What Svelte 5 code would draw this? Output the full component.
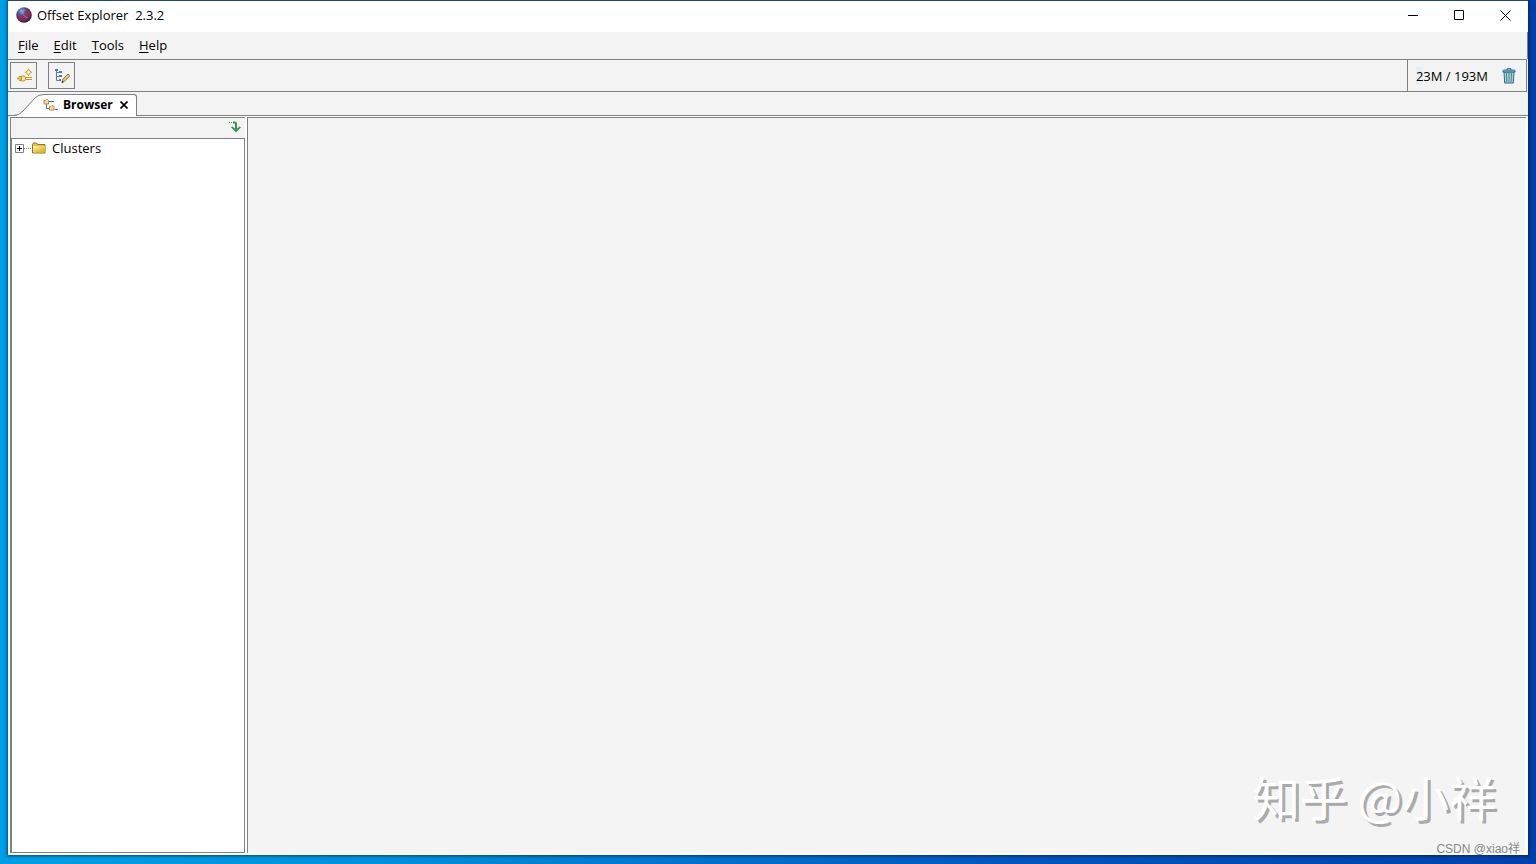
<script lang="ts">
  const menus = ["File", "Edit", "Tools", "Help"];
  const title = "Offset Explorer  2.3.2";
  let used = $state(23);
  let total = $state(193);
  let expanded = $state(false);
  let tabOpen = $state(true);
</script>

<div class="desktop">
  <div class="window">
    <header class="titlebar">
      <svg class="logo" width="16" height="16" viewBox="0 0 16 16">
        <defs>
          <radialGradient id="ball" cx="0.35" cy="0.25" r="0.8">
            <stop offset="0" stop-color="#8da3d6" />
            <stop offset="0.35" stop-color="#485293" />
            <stop offset="0.65" stop-color="#71284f" />
            <stop offset="1" stop-color="#251f50" />
          </radialGradient>
        </defs>
        <circle cx="8" cy="8" r="7.8" fill="url(#ball)" />
        <path d="M1 9q5 1 7-3t6-1q1 4-2 7t-7 1z" fill="#a83250" opacity=".5" />
        <path d="M4 3l3 2M9 2l-2 3 1 4 4 2" stroke="#b9b8dc" opacity=".4" fill="none" />
      </svg>
      <span class="title">{title}</span>
      <div class="controls">
        <button aria-label="Minimize">
          <svg width="11" height="11" viewBox="0 0 11 11"><path d="M0 5.5h10" stroke="#000" /></svg>
        </button>
        <button aria-label="Maximize">
          <svg width="11" height="11" viewBox="0 0 11 11"><path d="M.5.5h9v9h-9z" stroke="#000" fill="none" /></svg>
        </button>
        <button aria-label="Close">
          <svg width="11" height="11" viewBox="0 0 11 11"><path d="M.5.5l10 10M10.5.5l-10 10" stroke="#000" /></svg>
        </button>
      </div>
    </header>

    <nav class="menubar">
      {#each menus as menu}
        <button><u>{menu[0]}</u>{menu.slice(1)}</button>
      {/each}
    </nav>

    <div class="toolbar">
      <button class="tool" aria-label="Add connection">
        <svg width="16" height="16" viewBox="0 0 16 16" fill="none" stroke="#c59526">
          <path d="M1 10.500h2M3 8.500h2v4H3zM5.500 8H8q1.500 0 1.500 2.500T8 13H5.500zM9.500 9.500H16M9.500 11.500H16" fill="#f7e6a5" />
          <path d="M12.500.8L13.600 3l2.200 1.300-2.200 1.300-1.100 2.200-1.100-2.200-2.200-1.300L11.400 3z" fill="#fff4bf" stroke-width=".9" />
        </svg>
      </button>
      <button class="tool" aria-label="Edit connection">
        <svg width="16" height="16" viewBox="0 0 16 16" fill="none">
          <path d="M2.500 3v9.500h3M2.500 4.500h3M2.500 8.500h3" stroke="#5f7fb8" />
          <path d="M1 1h3v2H1zM5 3h3v2H5zM5 7h3v2H5zM5 11h2v2H5z" fill="#4f78bd" />
          <path d="M8 14.500l.8-3 5.200-5.500 1.800 1.800L10.500 13.300z" fill="#e4cf85" stroke="#8d6f31" />
          <path d="M7.500 15l.8-2 1.200 1.200z" fill="#333" />
        </svg>
      </button>
      <div class="memory">
        <span>{used}M / {total}M</span>
        <button aria-label="Run garbage collector">
          <svg width="14" height="16" viewBox="0 0 14 16">
            <path d="M2 4h10l-.7 11H2.700z" fill="#a8d8c0" stroke="#276b99" />
            <path d="M4.500 5l.3 9M7 5v9M9.500 5l-.3 9" stroke="#3a7ba0" stroke-width=".9" />
            <path d="M5 2V.7h4V2" stroke="#276b99" fill="none" />
            <path d="M1.500 2h11l.8 2H.7z" fill="#7db8c6" stroke="#245f8d" stroke-width=".8" />
          </svg>
        </button>
      </div>
    </div>

    <div class="tabs">
      {#if tabOpen}
        <div class="tab">
          <svg width="30" height="22" viewBox="0 0 30 22">
            <path d="M0 22Q5 21.500 9 17L21 4Q24 .5 30 .5V22z" fill="#fff" />
            <path d="M0 21.500Q5 21.500 9 17L21 4Q24 .5 30 .5" fill="none" stroke="#7b7b7b" />
          </svg>
          <div class="tab-body">
            <svg width="16" height="14" viewBox="0 0 16 14" fill="none">
              <path d="M3.500 6v4.500H7M6 3.500h4" stroke="#3b83ae" />
              <path d="M1 2.500h1.500l1-1h1l1 1V6H1z" fill="#fbd7a0" stroke="#c8873b" />
              <path d="M6.500 8.500H8l1-1h1l1 1V12H6.500z" fill="#fbd7a0" stroke="#c8873b" />
              <path d="M7 3.500h4M12 11.500h3" stroke="#2d719d" />
            </svg>
            <span>Browser</span>
            <button aria-label="Close tab" onclick={() => (tabOpen = false)}>
              <svg width="8" height="8" viewBox="0 0 8 8"><path d="M.5.5l7 7M7.500.5l-7 7" stroke="#000" stroke-width="1.600" /></svg>
            </button>
          </div>
        </div>
      {/if}
    </div>

    <main class="content">
      <aside class="sidebar">
        <div class="side-head">
          <button aria-label="Link selection">
            <svg width="13" height="12" viewBox="0 0 13 12">
              <path d="M1 1.500h1M3 1.500h1" stroke="#4d9b63" />
              <path d="M5 1.500h2Q8 1.500 8 3v5" stroke="#388b50" stroke-width="2" fill="none" />
              <path d="M3 6.200l1.500-.7L8 8.500l3.500-3 1.500.7L8 11.500z" fill="#359453" />
            </svg>
          </button>
        </div>
        <div class="tree">
          <div class="node">
            <button aria-label="Expand Clusters" aria-expanded={expanded} onclick={() => (expanded = !expanded)}>
              <svg width="9" height="9" viewBox="0 0 9 9">
                <path d="M.5.5h8v8h-8z" fill="#fff" stroke="#808080" />
                <path d="M2 4.500h5" stroke="#000" />
                {#if !expanded}<path d="M4.500 2v5" stroke="#000" />{/if}
              </svg>
            </button>
            <span class="dots"></span>
            <svg width="14" height="12" viewBox="0 0 14 12">
              <defs>
                <linearGradient id="folder" x2="1" y2="1">
                  <stop stop-color="#fff39a" />
                  <stop offset="1" stop-color="#d0aa1d" />
                </linearGradient>
              </defs>
              <path d="M.5 2.500l1-1.500h3l1 1.500h7.500v8.500H.5z" fill="#dfc34a" stroke="#8f7427" />
              <path d="M1 4h12v6.500H1z" fill="url(#folder)" />
            </svg>
            <span class="label">Clusters</span>
          </div>
        </div>
      </aside>
      <section class="workspace"></section>
    </main>
  </div>

  <div class="watermark">知乎 @小祥</div>
  <div class="credit">CSDN @xiao祥</div>
</div>

<style>
  :global(body) {
    margin: 0;
  }
  .desktop {
    position: relative;
    box-sizing: border-box;
    height: 100vh;
    padding: 0 8px 9px;
    display: flex;
    background: linear-gradient(90deg, #009fe5 0%, #0090dc 25%, #0056bd 65%, #0040aa 100%);
    font-family: "Open Sans", "Noto Sans CJK SC", sans-serif;
    font-size: 13px;
    line-height: 18px;
    color: #000;
  }
  .window {
    flex: 1;
    min-width: 0;
    display: flex;
    flex-direction: column;
    border-top: 1px solid #27485f;
    background: #f3f3f3;
    box-shadow: 0 0 3px 1px rgba(0, 20, 50, 0.6);
  }
  button {
    display: flex;
    align-items: center;
    justify-content: center;
    padding: 0;
    border: 0;
    background: none;
    font: inherit;
    color: inherit;
  }
  svg {
    display: block;
    flex: none;
  }
  .titlebar {
    display: flex;
    align-items: center;
    box-sizing: border-box;
    height: 31px;
    padding: 0 0 3px 8px;
    background: #fff;
  }
  .title {
    margin-left: 5px;
    white-space: pre;
  }
  .controls {
    display: flex;
    align-self: stretch;
    margin-left: auto;
  }
  .controls button {
    width: 46px;
  }
  .menubar {
    display: flex;
    align-items: center;
    gap: 15px;
    box-sizing: border-box;
    height: 27px;
    padding: 0 0 1px 10px;
    border-right: 1px solid #808080;
  }
  .menubar u {
    text-underline-offset: 2px;
  }
  .toolbar {
    display: flex;
    align-items: center;
    gap: 11px;
    height: 31px;
    margin-right: 1px;
    padding-left: 2px;
    border: 1px solid #808080;
    border-left: 0;
  }
  .tool {
    width: 27px;
    height: 27px;
    border: 1px solid #808080;
  }
  .memory {
    display: flex;
    align-items: center;
    align-self: stretch;
    gap: 14px;
    margin-left: auto;
    padding: 0 10px 0 8px;
    border-left: 1px solid #808080;
  }
  .memory span {
    background: linear-gradient(90deg, #e3f0fb 6px, transparent 6px);
  }
  .tabs {
    display: flex;
    align-items: flex-end;
    height: 23px;
    border-bottom: 1px solid #808080;
  }
  .tab {
    display: flex;
    height: 22px;
    margin: 0 0 -1px 6px;
  }
  .tab-body {
    display: flex;
    align-items: center;
    gap: 4px;
    box-sizing: border-box;
    padding: 0 8px 2px 0;
    border-top: 1px solid #808080;
    border-right: 1px solid #808080;
    border-top-right-radius: 3px;
    background: #fff;
    font-weight: 700;
    font-size: 12px;
  }
  .tab-body svg {
    margin-left: -1px;
  }
  .tab-body button {
    margin-left: 4px;
  }
  .content {
    flex: 1;
    display: flex;
    min-height: 0;
    gap: 2px;
    padding: 1px 2px 2px;
    background: #fff;
  }
  .sidebar {
    display: flex;
    flex-direction: column;
    box-sizing: border-box;
    width: 235px;
    border-top: 1px solid #808080;
    border-left: 1px solid #808080;
    background: #f3f3f3;
  }
  .side-head {
    display: flex;
    justify-content: flex-end;
    align-items: center;
    box-sizing: border-box;
    height: 20px;
    padding: 0 4px 2px 0;
  }
  .tree {
    flex: 1;
    border: 1px solid #808080;
    background: #fff;
  }
  .node {
    display: flex;
    align-items: center;
    height: 18px;
    padding-left: 3px;
  }
  .dots {
    width: 7px;
    margin-right: 1px;
    border-top: 1px dotted #808080;
  }
  .label {
    margin-left: 6px;
  }
  .workspace {
    flex: 1;
    border-top: 1px solid #808080;
    border-left: 1px solid #808080;
    background: #f4f4f4;
  }
  .watermark {
    position: absolute;
    right: 40px;
    bottom: 34px;
    font-family: "Noto Sans CJK SC", sans-serif;
    font-size: 47px;
    line-height: 68px;
    color: #fff;
    text-shadow: 3px 3px 0 #aaa;
    pointer-events: none;
  }
  .credit {
    position: absolute;
    right: 16px;
    bottom: 6px;
    font-family: "Liberation Sans", "Noto Sans CJK SC", sans-serif;
    font-size: 12px;
    line-height: 18px;
    color: #888;
    pointer-events: none;
  }
</style>
